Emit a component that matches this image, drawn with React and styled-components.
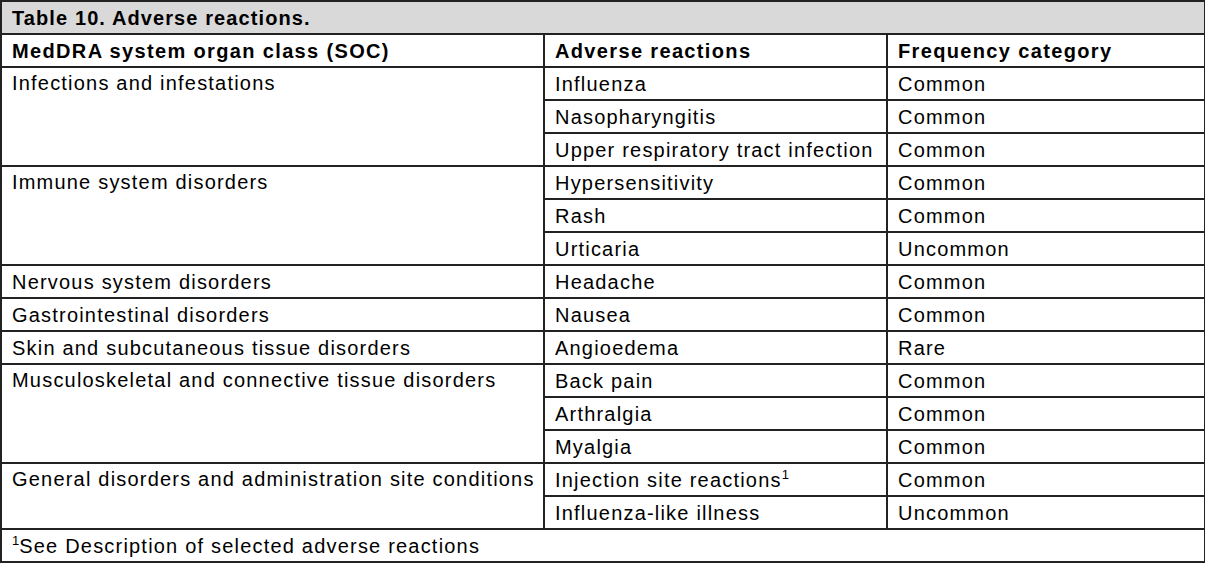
import React from "react";
import styled, { createGlobalStyle } from "styled-components";

const Global = createGlobalStyle`
  html, body { margin: 0; padding: 0; background: #fff; }
  body { font-family: "Liberation Sans", Arial, sans-serif; color: #000; }
`;

const Table = styled.table`
  border-collapse: collapse;
  table-layout: fixed;
  width: 1204px;
  font-size: 20px;
  line-height: 1;
  letter-spacing: 1.2px;
`;

const Row = styled.tr`
  height: 33px;
`;

const TitleCell = styled.th`
  background: #d9d9d9;
  border: 2px solid #222;
  text-align: left;
  font-weight: bold;
  font-size: 20px;
  letter-spacing: 1.1px;
  padding: 0 10px;
  height: 31px;
`;

const HeadCell = styled.th`
  border: 2px solid #222;
  text-align: left;
  font-weight: bold;
  font-size: 20px;
  letter-spacing: 1.35px;
  padding: 0 9px 0 10px;
`;

const Cell = styled.td`
  border: 2px solid #222;
  padding: ${(p) => (p.$top ? "5px 9px 0 10px" : "0 9px 0 10px")};
  vertical-align: ${(p) => (p.$top ? "top" : "middle")};
  white-space: nowrap;
`;

const Sup = styled.sup`
  font-size: 13px;
  letter-spacing: 0;
  line-height: 0;
  vertical-align: 8px;
`;

const data = [
  ["Infections and infestations", [["Influenza", "Common"], ["Nasopharyngitis", "Common"], ["Upper respiratory tract infection", "Common"]]],
  ["Immune system disorders", [["Hypersensitivity", "Common"], ["Rash", "Common"], ["Urticaria", "Uncommon"]]],
  ["Nervous system disorders", [["Headache", "Common"]]],
  ["Gastrointestinal disorders", [["Nausea", "Common"]]],
  ["Skin and subcutaneous tissue disorders", [["Angioedema", "Rare"]]],
  ["Musculoskeletal and connective tissue disorders", [["Back pain", "Common"], ["Arthralgia", "Common"], ["Myalgia", "Common"]]],
  ["General disorders and administration site conditions", [["Injection site reactions", "Common", true], ["Influenza-like illness", "Uncommon"]]],
];

export default function App() {
  return (
    <>
      <Global />
      <Table>
        <colgroup>
          <col style={{ width: 543 }} />
          <col style={{ width: 343 }} />
          <col style={{ width: 318 }} />
        </colgroup>
        <thead>
          <Row>
            <TitleCell colSpan={3}>Table 10. Adverse reactions.</TitleCell>
          </Row>
          <Row>
            <HeadCell>MedDRA system organ class (SOC)</HeadCell>
            <HeadCell>Adverse reactions</HeadCell>
            <HeadCell>Frequency category</HeadCell>
          </Row>
        </thead>
        <tbody>
          {data.map(([soc, items]) =>
            items.map(([reaction, freq, note], i) => (
              <Row key={soc + reaction}>
                {i === 0 && (
                  <Cell rowSpan={items.length} $top={items.length > 1}>
                    {soc}
                  </Cell>
                )}
                <Cell>
                  {reaction}
                  {note && <Sup>1</Sup>}
                </Cell>
                <Cell>{freq}</Cell>
              </Row>
            ))
          )}
          <Row>
            <Cell colSpan={3}>
              <Sup>1</Sup>See Description of selected adverse reactions
            </Cell>
          </Row>
        </tbody>
      </Table>
    </>
  );
}
